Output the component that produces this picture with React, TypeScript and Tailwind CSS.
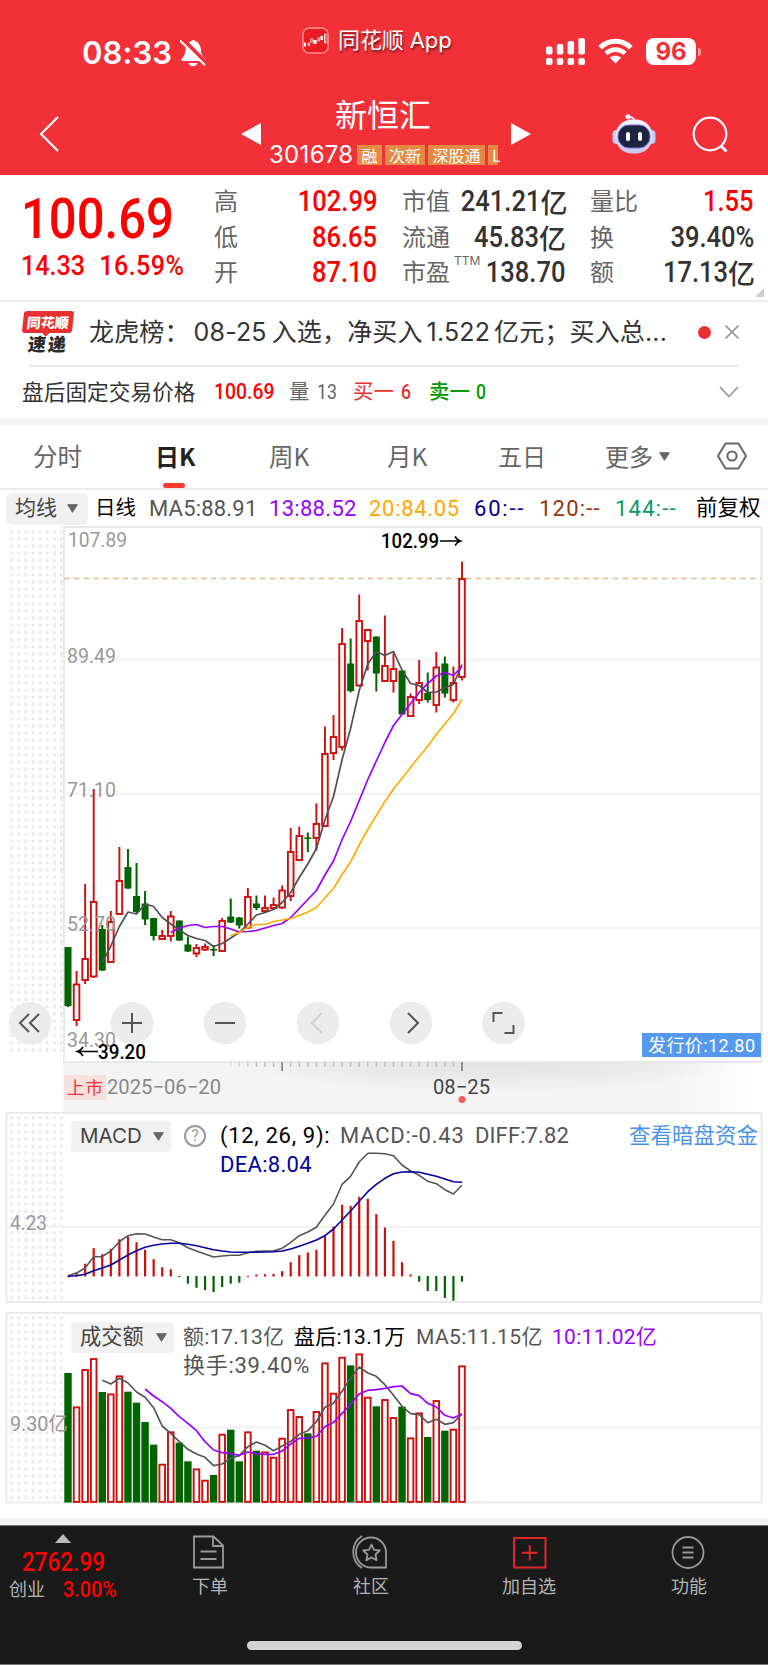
import React from 'react';
import clsx from 'clsx';

// [up, high, body top, body bottom, low]
type Candle = [0 | 1, number, number, number, number];

const CANDLES: Candle[] = [
  [0, 947, 947, 1006, 1007], [1, 971, 984, 1020.5, 1026], [1, 884, 958.5, 980.5, 984],
  [1, 789, 901.5, 977, 978], [0, 925, 929, 970.5, 971], [1, 911, 921.5, 962.5, 963],
  [1, 847, 880.5, 914.5, 915], [0, 849, 867, 888.5, 889], [0, 863, 896, 912, 913],
  [0, 891, 903.5, 919.5, 925], [0, 918, 918, 936, 940.5], [1, 930, 935.5, 939.5, 940],
  [1, 911, 916, 936.5, 941.5], [0, 920.5, 920.5, 940.5, 941], [0, 936.5, 944.5, 951.5, 952],
  [1, 944, 947.5, 954, 957], [1, 943.5, 946.5, 950, 951], [0, 945, 949, 950.5, 956],
  [1, 918, 920.5, 951.5, 952], [0, 898.5, 916.5, 922.5, 923], [0, 917, 917.5, 925.5, 928.5],
  [1, 888, 896.5, 928, 929], [0, 895.5, 903.5, 908, 910], [1, 895.5, 907.5, 911.5, 913],
  [1, 897.5, 904.5, 908.5, 910], [1, 885.5, 890, 908, 909], [1, 828, 851.5, 896.5, 901],
  [1, 826.5, 835.5, 860.5, 861], [0, 832.5, 837.5, 839, 852], [1, 803.5, 823.5, 838.5, 850.5],
  [1, 726.5, 753.5, 826.5, 827], [1, 715, 736.5, 753.5, 760], [1, 628, 643.5, 747.5, 750.5],
  [0, 638.5, 663.5, 691, 692.5], [1, 594.5, 620.5, 686, 686.5], [1, 629, 629.5, 641.5, 670.5],
  [0, 636.5, 636.5, 673.5, 691.5], [1, 615.5, 665.5, 681.5, 682], [1, 653.5, 668.5, 681.5, 692.5],
  [0, 670.5, 670.5, 714.5, 715], [1, 693.5, 696.5, 716.5, 717], [1, 660, 682.5, 700.5, 704],
  [0, 672.5, 693, 700, 702.5], [1, 652, 667, 705.5, 712.5], [0, 656.5, 663.5, 693.5, 697.5],
  [1, 666.5, 682.5, 700.5, 702.5], [1, 561.5, 578.5, 677.5, 680.5],
];

const MA5 = [962.5, 946, 926.5, 912, 914, 904, 906.5, 917.5, 924, 930, 935.5, 938.5, 940.5, 946.5, 943.5, 938, 932.5, 924, 915, 912.5, 909.5, 902.5, 892.5, 877.5, 864, 848.5, 820, 796.5, 759.5, 728.5, 690.5, 664, 651.5, 655.5, 651.5, 670, 683.5, 685.5, 692.5, 692, 687.5, 684.5, 664.5];
const MA13 = [932.5, 928, 925.5, 924.5, 927.5, 926.5, 926.5, 929, 932, 931.5, 930.5, 928, 925.5, 923.5, 917.5, 908.5, 899.5, 890.5, 875, 861, 839.5, 821.5, 800.5, 779.5, 761, 742.5, 725.5, 714.5, 703.5, 692.5, 683.5, 676, 672.5, 675.5, 666.5];
const MA20 = [935.5, 932.5, 927.5, 924.5, 924.5, 921.5, 920, 918.5, 915.5, 912, 907.5, 898, 888.5, 874.5, 862, 845, 829.5, 815.5, 801.5, 789, 778.5, 767.5, 756.5, 746.5, 734.5, 724, 713.5, 699.5];

const HIST = [0.3, 4, 12.7, 28.3, 22.3, 27.7, 37.3, 39.7, 34.3, 26.7, 17.3, 9.3, 7.3, -0.7, -7.7, -11.7, -14, -16, -11, -7.7, -6.7, 0.7, 2, 2.3, 2.7, 5.3, 14.3, 21.3, 24, 26.7, 41, 50, 71.7, 70.7, 79.7, 77.7, 62.3, 49, 35.7, 14.3, 2, -5.7, -15, -15, -22, -24.7, -5.7];
const DIFF = [527, 519, 504, 470, 470, 453, 425, 407, 401, 402, 411, 419, 419, 428, 443, 453, 462, 471, 468, 466, 466, 458, 454, 453, 452, 445, 427, 407, 396, 382, 346, 312, 253, 229, 186, 160, 160, 161, 167, 195, 213, 226, 244, 251, 269, 282, 256];
const DEA = [529, 527, 523, 512, 504, 495, 480, 465, 452, 442, 436, 432, 430, 430, 433, 437, 443, 449, 453, 456, 457, 457, 457, 456, 455, 453, 447, 439, 430, 420, 407, 387, 360, 333, 304, 275, 253, 235, 221, 216, 215, 217, 223, 229, 237, 245, 247];

const VOLUME = [219, 320, 208, 175, 276, 281, 227, 275, 308, 366, 434, 492, 395, 428, 484, 506, 540, 525, 402, 389, 484, 395, 452, 455, 471, 414, 328, 349, 400, 334, 188, 279, 171, 196, 161, 291, 319, 298, 352, 320, 413, 338, 411, 301, 392, 387, 197];
const VOL5 = [241, 252, 235, 249, 276, 292, 323, 378, 400, 425, 448, 462, 472, 497, 492, 475, 467, 440, 426, 436, 452, 438, 424, 403, 392, 365, 322, 310, 274, 235, 201, 219, 229, 254, 286, 319, 341, 344, 368, 358, 373, 368, 342];
const VOL10 = [267, 288, 305, 325, 350, 370, 392, 425, 450, 458, 461, 466, 456, 461, 463, 463, 453, 432, 415, 414, 409, 380, 367, 340, 313, 282, 271, 269, 265, 260, 258, 281, 287, 310, 321, 346, 354, 342];

const RED = '#cf0d0d';
const GREEN = '#006400';
const cx = (i: number) => 68 + i * 8.565;

const line = (values: number[], start: number, toY: (v: number) => number = (v) => v) =>
  values.map((v, i) => `${cx(start + i).toFixed(1)},${toY(v).toFixed(1)}`).join(' ');

const NUM = 'font-[Roboto,"Noto_Sans_CJK_SC",sans-serif]';

function Caret({ className }: { className?: string }) {
  return (
    <svg viewBox="0 0 11 9" className={clsx('w-[11px] h-[9px] shrink-0', className)}>
      <path d="M0.7 0.7h9.6L5.500 8.300z" fill="#666" stroke="#666" strokeLinejoin="round" />
    </svg>
  );
}

function Dots({ id, y, height }: { id: string; y: number; height: number }) {
  return (
    <>
      <defs>
        <pattern id={id} x="8" y={y} width="7.13" height="7.2" patternUnits="userSpaceOnUse">
          <circle cx="3.6" cy="3.6" r="1.7" fill="#e9e9e9" />
        </pattern>
      </defs>
      <rect x="8" y={y} width="55.5" height={height} fill={`url(#${id})`} />
    </>
  );
}

function AxisLabel({ x, y, width, children, fill = '#999', weight = 400 }: { x: number; y: number; width: number; children: string; fill?: string; weight?: number }) {
  return (
    <text x={x} y={y} textLength={width} lengthAdjust="spacingAndGlyphs" fontSize="20" fontWeight={weight} fill={fill} fontFamily='Roboto, "Noto Sans CJK SC", sans-serif'>
      {children}
    </text>
  );
}

function StatusBar() {
  return (
    <div className="flex items-start h-[88px] pl-[82px] pr-[67px] text-white">
      <span className="mt-[30px] w-[98px] text-[31px] leading-[46px] font-semibold font-[Inter,sans-serif] tracking-[0.1px]">08:33</span>
      <svg viewBox="0 0 26 28" className="mt-[39px] w-[26px] h-7 shrink-0">
        <path d="M2 19.500c3.500-3 3-7 4-11C7 4.500 9.500 2.500 11.500 2a2 2 0 0 1 3.500 0C18.500 3 20.500 6 20.800 10c.3 4.500 1.200 7 4 9.500 1 1.200.3 2.500-1 2.500H3c-1.500 0-2.200-1.300-1-2.500z" fill="#fff" />
        <path d="M8.500 24h9c-.5 2-2.300 3.200-4.500 3.200S9 26 8.500 24z" fill="#fff" />
        <path d="M2 0l24.500 25" stroke="#f23038" strokeWidth="5" />
        <path d="M0.800 2.200l23.500 23.300" stroke="#fff" strokeWidth="2.200" strokeLinecap="round" />
      </svg>
      <div className="flex items-center ml-[96px] mt-[27px]">
        <svg viewBox="0 0 27 27" className="w-[27px] h-[27px]">
          <rect x="1" y="1" width="25" height="25" rx="6" fill="#e61e24" stroke="#ff8d90" strokeWidth="1.500" />
          <path d="M2 15.500h2v4H2zM11.500 13h3v4h-3zM18.500 9h2.500v4h-2.500z" fill="#fff" />
          <path d="M6 16h1.600v2.500H6zM8.800 12h2v3h-2zM15.800 11h1.600v3h-1.600zM22.500 7h1.500v9h-1.500z" fill="none" stroke="#fff" strokeWidth=".8" />
        </svg>
        <span className="ml-[9px] text-[22px] leading-[27px] whitespace-nowrap tracking-[-0.1px] font-[Inter,'Noto_Sans_CJK_SC',sans-serif] [text-shadow:1px_2px_2px_rgba(0,0,0,0.5)]">
          同花顺 App
        </span>
      </div>
      <svg viewBox="0 0 39 27" className="ml-auto mt-[38px] w-[39px] h-[27px] shrink-0" fill="#fff">
        <rect x="0" y="8.500" width="6.500" height="8" rx="2" />
        <rect x="10.800" y="6" width="6.500" height="10.500" rx="2" />
        <rect x="21.600" y="3" width="6.500" height="13.500" rx="2" />
        <rect x="32.400" y="0" width="6.500" height="16.500" rx="2" />
        {[0, 10.8, 21.6, 32.4].map((x) => (
          <rect key={x} x={x} y="20" width="6.500" height="7" rx="2" />
        ))}
      </svg>
      <svg viewBox="0 0 35 26" className="ml-[13px] mt-[38px] w-[35px] h-[26px] shrink-0">
        <path d="M2.200 9.800C10.500 1.200 24.500 1.200 32.800 9.800" fill="none" stroke="#fff" strokeWidth="5" />
        <path d="M8 15.500C13.500 10.300 21.500 10.300 27 15.500" fill="none" stroke="#fff" strokeWidth="4.600" />
        <path d="M11.800 19.600C15 17 20 17 23.200 19.600L17.500 25.500z" fill="#fff" />
      </svg>
      <div className="flex items-center ml-[13px] mt-[38px]">
        <span className="w-[50px] h-[27px] rounded-[8px] bg-white text-[#f23038] text-center text-[24px] leading-[27px] font-bold font-[Inter,sans-serif]">96</span>
        <span className="ml-0.5 w-[3px] h-2 rounded-r-full bg-[#fa989c]" />
      </div>
    </div>
  );
}

function Tag({ children, className }: { children: string; className?: string }) {
  return <span className={clsx('h-5 shrink-0 bg-[#e38b45] text-center text-[16px] leading-5 whitespace-nowrap', className)}>{children}</span>;
}

function TitleBar() {
  return (
    <div className="flex h-[87px] text-white">
      <svg viewBox="0 0 20 36" className="ml-[39px] mt-7 w-5 h-9 shrink-0">
        <path d="M19 1L2 18l17 17" fill="none" stroke="#fff" strokeWidth="2.200" />
      </svg>
      <svg viewBox="0 0 20 22" className="ml-[182px] mt-[35px] w-5 h-[22px] shrink-0">
        <path d="M20 0v22L0 11z" fill="#fff" />
      </svg>
      <div className="ml-[8px] w-[231px]">
        <div className="ml-[-3px] mt-[2px] h-[50px] text-center text-[32px] leading-[46px]">新恒汇</div>
        <div className="flex items-center h-7 gap-[3px] overflow-hidden mt-px">
          <span className="w-[85px] shrink-0 text-[24px] leading-7 font-[Inter,sans-serif] tracking-[0.3px]">301678</span>
          <Tag className="w-[25px]">融</Tag>
          <Tag className="w-10">次新</Tag>
          <Tag className="w-[57px]">深股通</Tag>
          <Tag className="w-[10px] pl-[4px]">L</Tag>
        </div>
      </div>
      <svg viewBox="0 0 20 22" className="ml-[11px] mt-[35px] w-5 h-[22px] shrink-0">
        <path d="M0 0v22l20-11z" fill="#fff" />
      </svg>
      <svg viewBox="0 0 44 40" className="ml-[81px] mt-[26px] w-[44px] h-10 shrink-0">
        <defs>
          <linearGradient id="shell" x1="0" y1="0" x2="0" y2="1">
            <stop offset="0" stopColor="#f4f4ff" />
            <stop offset="1" stopColor="#c9c6ea" />
          </linearGradient>
        </defs>
        <path d="M17 3c4 0 5.500 1 5.500 5" fill="none" stroke="#e6e4f8" strokeWidth="1.800" />
        <circle cx="16" cy="2.800" r="2.500" fill="#f4f4ff" />
        <rect x="0.500" y="16" width="8" height="14" rx="4" fill="#c3cdf3" />
        <rect x="35.500" y="16" width="8" height="14" rx="4" fill="#c3cdf3" />
        <rect x="3.500" y="5.500" width="37" height="34" rx="16.500" fill="url(#shell)" />
        <rect x="6" y="11" width="32" height="23" rx="11" fill="#1b2441" stroke="#7c6fe0" />
        <rect x="14" y="18" width="4" height="9" rx="2" fill="#fff" />
        <rect x="26" y="18" width="4" height="9" rx="2" fill="#fff" />
      </svg>
      <svg viewBox="0 0 36 36" className="ml-9 mt-[28px] w-9 h-9 shrink-0">
        <circle cx="18" cy="18" r="16.300" fill="none" stroke="#fff" strokeWidth="2.200" />
        <path d="M28.500 29.500l6 6" stroke="#fff" strokeWidth="2.800" />
      </svg>
    </div>
  );
}

function Stat({ label, value, sup, red }: { label: string; value: string; sup?: string; red?: boolean }) {
  const hasUnit = value.endsWith('亿');
  return (
    <div className="flex items-center justify-between h-[35.5px]">
      <span className="-mt-[4px] flex text-[24px] leading-[35px] text-[#666] whitespace-nowrap">
        {label}
        {sup && <sup className="ml-1 top-0 w-0 text-[12px] leading-4 font-[Inter,sans-serif]">{sup}</sup>}
      </span>
      <span className={clsx('flex items-center leading-[35px] font-medium whitespace-nowrap', red ? 'text-[#f00]' : 'text-[#333]')}>
        <span className={clsx(NUM, 'origin-right scale-x-[0.88] text-[29px]')}>{hasUnit ? value.slice(0, -1) : value}</span>
        {hasUnit && <span className="-mr-px text-[27px]">亿</span>}
      </span>
    </div>
  );
}

function Quote() {
  return (
    <div className="flex h-[127px] border-b-2 border-[#ececec] relative">
      <div className={clsx(NUM, 'ml-[21px] w-[193px] pt-[14px] font-medium text-[#f00]')}>
        <div className="origin-left scale-x-[0.875] text-[56px] leading-[60px] whitespace-nowrap">100.69</div>
        <div className="flex origin-left scale-x-[0.88] text-[28.5px] leading-[34px] whitespace-nowrap">
          <span className="w-[89px]">14.33</span>
          <span className="tracking-[0.5px]">16.59%</span>
        </div>
      </div>
      <div className="w-[163px] pt-[9px]">
        <Stat label="高" value="102.99" red />
        <Stat label="低" value="86.65" red />
        <Stat label="开" value="87.10" red />
      </div>
      <div className="ml-[25px] w-[163px] pt-[9px]">
        <Stat label="市值" value="241.21亿" />
        <Stat label="流通" value="45.83亿" />
        <Stat label="市盈" value="138.70" sup="TTM" />
      </div>
      <div className="ml-[25px] w-[164px] pt-[9px]">
        <Stat label="量比" value="1.55" red />
        <Stat label="换" value="39.40%" />
        <Stat label="额" value="17.13亿" />
      </div>
      <svg viewBox="0 0 9 9" className="absolute right-1 bottom-[3px] w-[9px] h-[9px]">
        <path d="M9 0v9H0z" fill="#ccc" />
      </svg>
    </div>
  );
}

function News() {
  return (
    <div className="flex items-center h-[63px] pb-[3px] mx-[22px]">
      <div className="w-[52px] mr-[15px] font-black">
        <div className="relative ml-px w-[50px] h-[22px] -skew-x-6 rounded-[3px] bg-[#e93030] text-white text-center text-[14px] leading-[22px]">
          同花顺
          <span className="absolute left-5 -bottom-0.5 size-2 rotate-45 bg-[#e93030]" />
        </div>
        <div className="relative text-center text-[18px] leading-[21px] tracking-[2px] -skew-x-6 text-[#2b2b2b]">速递</div>
      </div>
      <span className="w-[601px] text-[25px] leading-9 tracking-[0.15px] text-[#333] whitespace-nowrap font-[Inter,'Noto_Sans_CJK_SC',sans-serif]">
        龙虎榜：<span className="ml-1 mr-[5px]">08-25</span>入选，净买入<span className="mx-1">1.522</span>亿元；买入总...
      </span>
      <span className="ml-[8px] size-[13px] shrink-0 rounded-full bg-[#e93030]" />
      <svg viewBox="0 0 14 14" className="ml-[14px] w-3.5 h-3.5 shrink-0">
        <path d="M0.500 0.500l13 13M13.500 0.500l-13 13" stroke="#999" strokeWidth="1.800" />
      </svg>
    </div>
  );
}

function FixedPrice() {
  return (
    <div className="flex items-center h-[53px] ml-[29px] mr-[29px] pb-0.5 border-t-2 border-[#ececec] text-[22px] text-[#333] whitespace-nowrap">
      <span className="-ml-[7px] w-[192px] text-[21.7px]">盘后固定交易价格</span>
      <span className={clsx(NUM, 'w-[75px] origin-left scale-x-[0.88] font-medium text-[#f00]')}>100.69</span>
      <span className="w-[64px] text-[20.5px] text-[#666]">量<span className={clsx(NUM, 'ml-[7px] inline-block origin-left scale-x-[0.86]')}>13</span></span>
      <span className="w-[76px] text-[20.5px] text-[#e93030]">买一<span className={clsx(NUM, 'ml-[7px] inline-block origin-left scale-x-[0.86] font-medium')}>6</span></span>
      <span className="text-[20.5px] font-medium text-[#090]">卖一<span className={clsx(NUM, 'ml-[6px] inline-block origin-left scale-x-[0.86]')}>0</span></span>
      <svg viewBox="0 0 20 12" className="ml-auto w-5 h-3">
        <path d="M1 1l9 9.500L19 1" fill="none" stroke="#999" strokeWidth="1.800" />
      </svg>
    </div>
  );
}

function Tabs() {
  return (
    <div className="flex h-[65px] pl-[33px] pr-[21px] border-b-2 border-[#ececec] text-[24.5px] leading-[62px] text-[#666] whitespace-nowrap">
      <span className="w-[122px]">分时</span>
      <span className="relative w-[114px] text-[24px] font-bold text-[#222]">
        日K
        <span className="absolute left-[8px] bottom-0 w-[22px] h-[5px] rounded-sm bg-[#fb3a30]" />
      </span>
      <span className="w-[118px]">周K</span>
      <span className="w-[111px]">月K</span>
      <span className="w-[107px] text-[24px]">五日</span>
      <span className="text-[24px]">更多</span>
      <Caret className="ml-[6px] mt-[27px]" />
      <svg viewBox="0 0 30 28" className="ml-auto mt-[17px] w-[30px] h-7">
        <path d="M8.500 1.500h13L29 14l-7.500 12.500h-13L1 14z" fill="none" stroke="#666" strokeWidth="2" strokeLinejoin="round" />
        <circle cx="15" cy="14" r="4.600" fill="none" stroke="#666" strokeWidth="2" />
      </svg>
    </div>
  );
}

function Averages() {
  return (
    <div className={clsx(NUM, 'flex items-center h-[36px] pl-1.5 pt-px text-[22px] whitespace-nowrap')}>
      <span className="flex items-center w-[82px] h-8 mr-[7px] pl-[9px] rounded-md bg-[#f1f1f1] text-[21px] text-[#444]">
        均线
        <Caret className="ml-[10px]" />
      </span>
      <span className="w-[54px] text-[20.5px] text-black">日线</span>
      <span className="w-[120px] tracking-[0.200px] text-[#555]">MA5:88.91</span>
      <span className="w-[100px] tracking-[0.300px] text-[#90f]">13:88.52</span>
      <span className="w-[105px] tracking-[0.700px] text-[#ffa800]">20:84.05</span>
      <span className="w-[65px] tracking-[1.800px] text-[#000096]">60:--</span>
      <span className="w-[76px] tracking-[1.200px] text-[#9c3208]">120:--</span>
      <span className="w-[81px] tracking-[1.200px] text-[#0a9a66]">144:--</span>
      <span className="text-[21.5px] text-black">前复权</span>
    </div>
  );
}

const ROUND_BUTTONS = [
  { x: 30, d: 'M-1 -9l-9 9l9 9M9 -9l-9 9l9 9', color: '#555' },
  { x: 132, d: 'M-10 0h20M0 -10v20', color: '#555' },
  { x: 225, d: 'M-10 0h20', color: '#555' },
  { x: 318, d: 'M4 -10l-10 10l10 10', color: '#d0d0d0' },
  { x: 411, d: 'M-3 -10l10 10l-10 10', color: '#555' },
  { x: 503.5, d: 'M-10 -1v-9h9M10 2v8h-9', color: '#555' },
];

function KLine() {
  return (
    <svg viewBox="0 526 768 586" className="block w-[768px] h-[586px]">
      <defs>
        <linearGradient id="axisFade" x1="0" y1="0" x2="1" y2="0">
          <stop offset="0" stopColor="#f4f4f4" />
          <stop offset="0.860" stopColor="#f4f4f4" />
          <stop offset="1" stopColor="#fff" />
        </linearGradient>
        <radialGradient id="axisShade" cx="0.500" cy="0" r="0.500" gradientTransform="translate(0 0) scale(1 1.600)">
          <stop offset="0" stopColor="#000" stopOpacity="0.070" />
          <stop offset="0.600" stopColor="#000" stopOpacity="0.040" />
          <stop offset="1" stopColor="#000" stopOpacity="0" />
        </radialGradient>
      </defs>
      <Dots id="dotsK" y={528} height={526} />
      <rect x="63" y="1062" width="698" height="50" fill="url(#axisFade)" />
      <rect x="240" y="1062" width="500" height="38" fill="url(#axisShade)" />
      <rect x="64" y="527" width="697.500" height="535" fill="#fff" stroke="#e8e8e8" strokeWidth="2" />
      {[659.5, 794, 928].map((y) => (
        <path key={y} d={`M64 ${y}H761`} stroke="#f2f2f2" strokeWidth="2" />
      ))}
      <path d="M64 578.500H761" stroke="#e3b98d" strokeWidth="1.400" strokeDasharray="5.500 4.300" />

      {ROUND_BUTTONS.map((b) => (
        <g key={b.x} transform={`translate(${b.x} 1023)`}>
          <circle r="21.300" fill="#ececec" />
          <path d={b.d} fill="none" stroke={b.color} strokeWidth="2" />
        </g>
      ))}

      {CANDLES.map(([up, high, top, bottom, low], i) => {
        const x = cx(i);
        return up ? (
          <g key={i} stroke={RED} strokeWidth="1.900" fill="#fff">
            <path d={`M${x} ${high}V${top}M${x} ${bottom}V${low}`} />
            <rect x={x - 2.8} y={top + 0.5} width="5.600" height={Math.max(bottom - top - 1, 1)} />
          </g>
        ) : (
          <g key={i} fill={GREEN}>
            <rect x={x - 1} y={high} width="2" height={low - high} />
            <rect x={x - 3.5} y={top} width="7" height={bottom - top} />
          </g>
        );
      })}

      <AxisLabel x={68} y={547} width={59}>107.89</AxisLabel>
      <AxisLabel x={67} y={663} width={49}>89.49</AxisLabel>
      <AxisLabel x={67} y={797} width={49}>71.10</AxisLabel>
      <AxisLabel x={67} y={931} width={49}>52.70</AxisLabel>
      <AxisLabel x={67} y={1047} width={49}>34.30</AxisLabel>

      <g fill="none" strokeWidth="1.700" strokeLinejoin="round">
        <polyline points={line(MA5, 4)} stroke="#505050" />
        <polyline points={line(MA13, 12)} stroke="#90f" />
        <polyline points={line(MA20, 19)} stroke="#ffae00" />
      </g>

      <AxisLabel x={381} y={548} width={58} fill="#000" weight={500}>102.99</AxisLabel>
      <path d="M440 541h20M455 536.500q2 3.500 5.500 4.500q-3.500 1-5.500 4.500" fill="none" stroke="#000" strokeWidth="1.600" />
      <path d="M98 1051.500h-20M83 1047q-2 3.500-5.500 4.500q3.500 1 5.500 4.500" fill="none" stroke="#000" strokeWidth="1.600" />
      <AxisLabel x={98} y={1059} width={48} fill="#000" weight={500}>39.20</AxisLabel>

      <rect x="642" y="1033" width="119" height="24" fill="#5599ee" />
      <text x="648" y="1052" fontSize="18" textLength="107" fill="#fff" fontFamily='Roboto, "Noto Sans CJK SC", sans-serif'>发行价:12.80</text>

      {CANDLES.slice(19).map((_, i) => {
        const big = i === 6 || i === 27;
        return <path key={i} d={`M${cx(i + 19)} 1062v${big ? 9 : 5}`} stroke={big ? '#888' : '#bbb'} strokeWidth={big ? 1.8 : 1.4} opacity={i < 3 ? 0.3 + i * 0.25 : 1} />;
      })}
      <rect x="64" y="1075" width="42" height="25" fill="#f6dfdf" />
      <text x="67" y="1094" fontSize="17.500" textLength="36" fill="#f03535" fontFamily='"Noto Sans CJK SC", sans-serif'>上市</text>
      <AxisLabel x={107} y={1093.5} width={114} fill="#888">2025−06−20</AxisLabel>
      <AxisLabel x={433} y={1093.5} width={57} fill="#444">08−25</AxisLabel>
      <circle cx="462" cy="1099.500" r="3.500" fill="#fb5b5b" />
    </svg>
  );
}

function Macd() {
  return (
    <div className="relative h-[190px]">
      <svg viewBox="0 1112 768 192" className="absolute inset-0 w-[768px] h-[192px]">
        <rect x="6.500" y="1113" width="755" height="189" fill="#fff" stroke="#e8e8e8" strokeWidth="1.800" />
        <Dots id="dotsM" y={1114} height={186} />
        <path d="M7 1227H761" stroke="#f2f2f2" strokeWidth="2" />
        {HIST.map((v, i) => (
          <rect key={i} x={cx(i) - 1.1} y={v > 0 ? 1276.5 - v : 1276} width="2.200" height={Math.max(Math.abs(v), 1)} fill={v > 0 ? RED : GREEN} />
        ))}
        <g fill="none" strokeWidth="1.600" strokeLinejoin="round">
          <polyline points={line(DIFF, 0, (v) => 1100 + v / 3)} stroke="#555" />
          <polyline points={line(DEA, 0, (v) => 1100 + v / 3)} stroke="#0000a0" />
        </g>
        <AxisLabel x={10} y={1229.5} width={37}>4.23</AxisLabel>
      </svg>
      <div className={clsx(NUM, 'relative flex items-center pt-2 pl-[71px] text-[22px] leading-8 text-[#555] whitespace-nowrap')}>
        <span className="flex items-center w-[100px] h-[31px] pl-[9px] rounded bg-[#f1f1f1] text-[20.5px] text-[#444] font-[Inter,sans-serif]">
          MACD
          <Caret className="ml-[11px]" />
        </span>
        <span className="ml-[13px] mr-[14px] size-[22px] rounded-full border-2 border-[#999] text-center text-[16px] leading-[18px] text-[#999]">?</span>
        <span className="w-[120px] tracking-[0.700px] text-black">(12, 26, 9):</span>
        <span className="w-[135px] tracking-[0.800px]">MACD:-0.43</span>
        <span className="w-[154px] tracking-[0.100px]">DIFF:7.82</span>
        <span className="text-[21.5px] text-[#4a93e8]">查看暗盘资金</span>
      </div>
      <div className={clsx(NUM, 'relative pl-[220px] -mt-[3px] text-[22px] leading-8 tracking-[0.300px] text-[#0000a0]')}>DEA:8.04</div>
    </div>
  );
}

function Turnover() {
  return (
    <div className="relative h-[202px] mt-[10px]">
      <svg viewBox="0 1312 768 192" className="absolute inset-0 w-[768px] h-[192px]">
        <rect x="6.500" y="1313" width="755" height="189.500" fill="#fff" stroke="#e8e8e8" strokeWidth="1.800" />
        <Dots id="dotsV" y={1314} height={187} />
        <path d="M7 1427.500H761" stroke="#f2f2f2" strokeWidth="2" />
        {VOLUME.map((v, i) => {
          const top = 1300 + v / 3;
          return CANDLES[i][0] ? (
            <rect key={i} x={cx(i) - 2.8} y={top + 0.7} width="5.600" height={1501.2 - top} fill="#fff" stroke={RED} strokeWidth="1.900" />
          ) : (
            <rect key={i} x={cx(i) - 3.7} y={top} width="7.400" height={1502.5 - top} fill={GREEN} />
          );
        })}
        <g fill="none" strokeWidth="1.700" strokeLinejoin="round">
          <polyline points={line(VOL5, 4, (v) => 1300 + v / 3)} stroke="#555" />
          <polyline points={line(VOL10, 9, (v) => 1300 + v / 3)} stroke="#90f" />
        </g>
        <AxisLabel x={10} y={1430.5} width={58}>9.30亿</AxisLabel>
      </svg>
      <div className={clsx(NUM, 'relative flex items-center pt-[9px] pl-[71px] text-[21px] leading-8 text-[#555] whitespace-nowrap')}>
        <span className="flex items-center w-[103px] h-[31px] mr-[9px] pl-[9px] rounded bg-[#f1f1f1] text-[#444] text-[21.2px]">
          成交额
          <Caret className="ml-[12px]" />
        </span>
        <span className="w-[111px] tracking-[0.150px]">额:17.13亿</span>
        <span className="w-[122px] tracking-[0.300px] text-black">盘后:13.1万</span>
        <span className="w-[136px] tracking-[0.400px]">MA5:11.15亿</span>
        <span className="tracking-[0.300px] text-[#90f]">10:11.02亿</span>
      </div>
      <div className={clsx(NUM, 'relative pl-[183px] -mt-[3px] text-[22px] leading-8 tracking-[0.700px] text-[#555]')}>换手:39.40%</div>
    </div>
  );
}

function NavItem({ label, className, children }: { label: string; className?: string; children: React.ReactNode }) {
  return (
    <div className={clsx('flex flex-col items-center pt-[9px]', className)}>
      <svg viewBox="0 0 38 34" className="w-[38px] h-[34px]" fill="none" stroke="#999" strokeWidth="1.800">
        {children}
      </svg>
      <span className="mt-px text-[18px] leading-[30px] text-[#b4b4b4]">{label}</span>
    </div>
  );
}

function BottomNav() {
  return (
    <div className="h-[140px] bg-[#1a1a1a] border-y border-[#777]">
      <div className="flex h-[115px]">
        <div className={clsx(NUM, 'w-[126px] pt-2 text-[#f00] font-medium')}>
          <svg viewBox="0 0 16 9" className="ml-[55px] w-4 h-[9px]">
            <path d="M8 0l8 9H0z" fill="#bbb" />
          </svg>
          <div className="mt-[3px] ml-[22px] origin-left scale-x-[0.9] text-[25px] leading-[34px]">2762.99</div>
          <div className="flex -mt-[4px] ml-[9px] leading-7">
            <span className="w-[54px] text-[18px] font-normal text-[#b4b4b4]">创业</span>
            <span className="origin-left scale-x-[0.9] text-[22px]">3.00%</span>
          </div>
        </div>
        <NavItem label="下单" className="w-[168px]">
          <path d="M3 1.500H22.500l9.500 9V32.500H3zM22 2v9H31.500M9.500 16.500h16M9.500 24h16" />
        </NavItem>
        <NavItem label="社区" className="w-[154px]">
          <g transform="translate(-1.500 0)">
            <path d="M35.500 32.500H21A15 15 0 1 1 35.500 18zM11.500 1A19 19 0 0 0 11.500 33" />
            <path d="M21 9.500l2.500 5.300 5.800.7-4.300 4 1.100 5.700L21 22.400l-5.100 2.800 1.100-5.700-4.300-4 5.800-.7z" strokeLinejoin="round" />
          </g>
        </NavItem>
        <NavItem label="加自选" className="w-[162px]">
          <path d="M4 3h31.500v29.500H4zM19.750 10v15.500M12 17.750h15.500" stroke="#e0262b" strokeWidth="2" />
        </NavItem>
        <NavItem label="功能" className="w-[158px]">
          <circle cx="18" cy="17.500" r="15.500" />
          <path d="M12.500 12.500h11M12.500 17.500h11M12.500 22.500h11" />
        </NavItem>
      </div>
      <div className="mx-auto w-[275px] h-[9px] rounded-full bg-[#d5d4d5]" />
    </div>
  );
}

export default function App() {
  return (
    <div className="w-[768px] h-[1665px] overflow-hidden bg-white font-['Noto_Sans_CJK_SC',sans-serif]">
      <header className="h-[175px] bg-[#f23038]">
        <StatusBar />
        <TitleBar />
      </header>
      <Quote />
      <News />
      <FixedPrice />
      <div className="h-[7px] bg-[#f4f4f4]" />
      <Tabs />
      <Averages />
      <KLine />
      <Macd />
      <Turnover />
      <div className="h-[4px]" />
      <div className="h-[7px] bg-[#f2f2f2]" />
      <BottomNav />
    </div>
  );
}
